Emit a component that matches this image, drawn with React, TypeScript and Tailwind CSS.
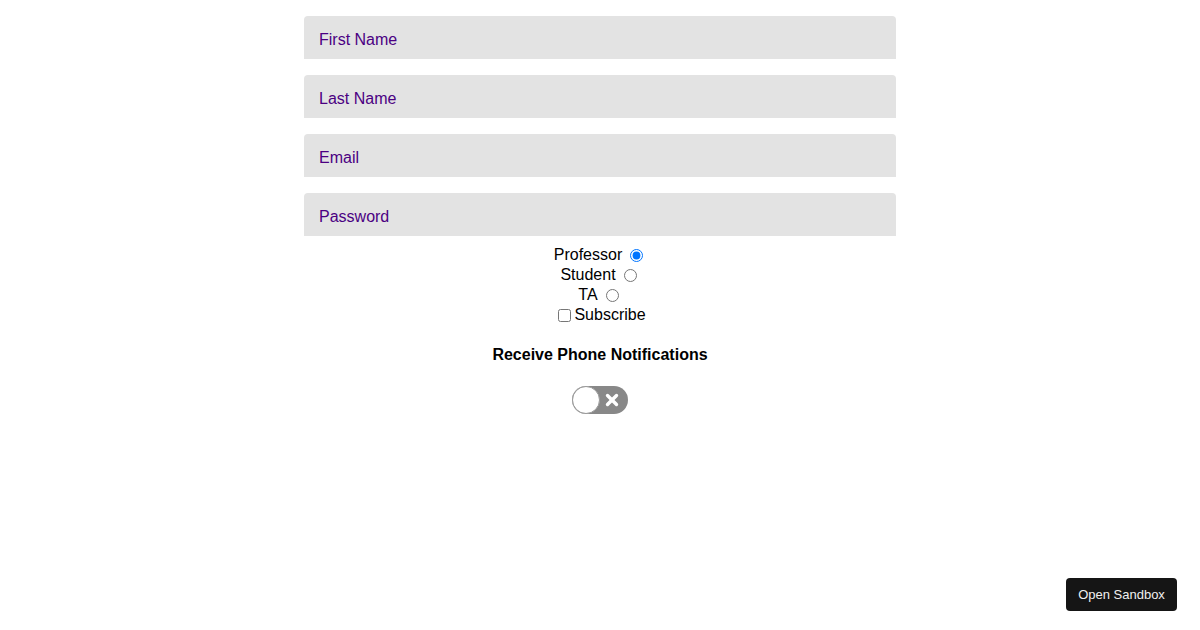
import { X } from "lucide-react";

const fields = [
  { name: "firstName", placeholder: "First Name", type: "text" },
  { name: "lastName", placeholder: "Last Name", type: "text" },
  { name: "email", placeholder: "Email", type: "email" },
  { name: "password", placeholder: "Password", type: "password" },
];

const roles = ["Professor", "Student", "TA"];

export default function App() {
  return (
    <div className="min-h-screen bg-white font-['Liberation_Sans',Arial,sans-serif] text-base text-black">
      <form className="mx-auto flex w-[592px] flex-col pt-4">
        <div className="flex flex-col gap-4">
          {fields.map((f) => (
            <input
              key={f.name}
              name={f.name}
              type={f.type}
              placeholder={f.placeholder}
              className="h-[43px] w-full rounded-t-[4px] bg-[#e3e3e3] px-[15px] pt-[5px] text-base text-[#4b0082] outline-none placeholder:text-[#4b0082]"
            />
          ))}
        </div>

        <div className="mt-[9px] flex flex-col items-center leading-5">
          {roles.map((r, i) => (
            <label key={r} className="flex h-5 items-center">
              {r}
              <input
                type="radio"
                name="role"
                defaultChecked={i === 0}
                className="ml-[8px] mr-[3px] h-[13px] w-[13px]"
              />
            </label>
          ))}
          <label className="flex h-5 items-center">
            <input type="checkbox" className="ml-[4px] mr-[3px] h-[13px] w-[13px]" />
            Subscribe
          </label>
        </div>

        <h3 className="mt-5 text-center font-bold leading-5">Receive Phone Notifications</h3>

        <div className="mt-[21px] flex justify-center">
          <button
            type="button"
            className="relative flex h-7 w-14 items-center rounded-full bg-[#888888]"
          >
            <span className="h-7 w-7 rounded-full border border-[#9a9a9a] bg-white" />
            <X className="ml-[3px] h-[18px] w-[18px] text-white" strokeWidth={4.5} />
          </button>
        </div>
      </form>

      <button className="fixed bottom-[19px] right-[23px] h-[33px] w-[111px] rounded-[4px] bg-[#151515] text-[13px] text-[#f0f0f0]">
        Open Sandbox
      </button>
    </div>
  );
}
